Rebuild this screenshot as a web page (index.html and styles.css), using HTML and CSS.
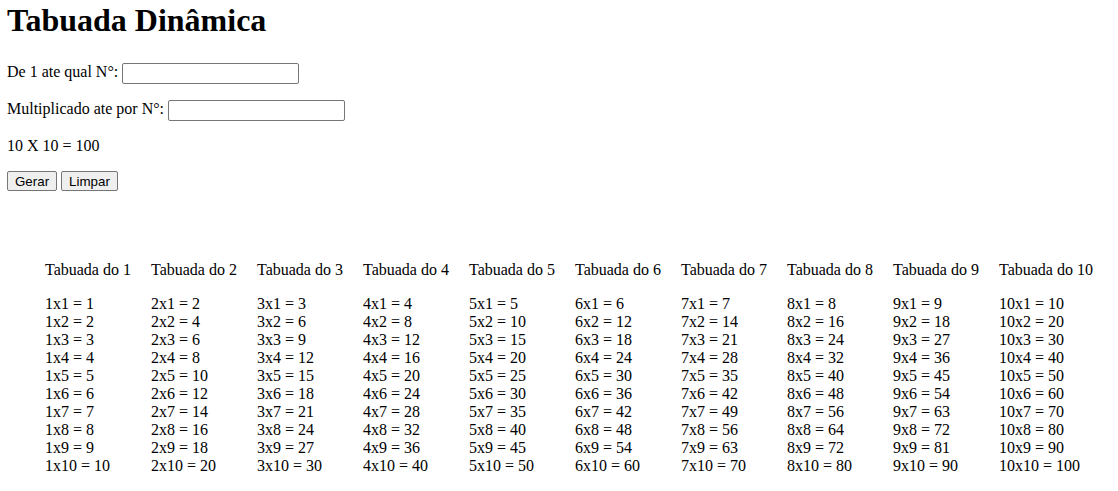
FILE: index.html
```html
<!DOCTYPE html>
<html>
  <head>
    <meta charset="utf-8" />
    <title>Tabuada Dinâmica</title>
    <meta name="viewport" content="width=device-width, initial-scale=1" />
    <link rel="stylesheet" href="styles.css">
  </head>

  <body>
    <h1>Tabuada Dinâmica</h1>

    <p>De 1 ate qual N°: <input type="text" id="ateNum" /></p>
    <p>Multiplicado ate por N°: <input type="text" id="multNum" /></p>
    <p id="resumo">10 X 10 = 100</p>
    <p>
      <button id="gerar">Gerar</button>
      <button id="limpar">Limpar</button>
    </p>

    <div id="tabuadas"></div>

    <script>
      var tabuadas = document.querySelector("#tabuadas");
      var resumo = document.querySelector("#resumo");

      function gerarTabuada(ate, mult) {
        tabuadas.innerHTML = "";
        for (var i = 1; i <= ate; i++) {
          var coluna = document.createElement("div");
          coluna.className = "coluna";

          var titulo = document.createElement("p");
          titulo.className = "titulo";
          titulo.textContent = "Tabuada do " + i;
          coluna.appendChild(titulo);

          var linhas = document.createElement("div");
          linhas.className = "linhas";
          for (var j = 1; j <= mult; j++) {
            var linha = document.createElement("div");
            linha.textContent = i + "x" + j + " = " + i * j;
            linhas.appendChild(linha);
          }
          coluna.appendChild(linhas);
          tabuadas.appendChild(coluna);
        }
        resumo.textContent = ate + " X " + mult + " = " + ate * mult;
      }

      document.querySelector("#gerar").addEventListener("click", function () {
        var ate = parseInt(document.querySelector("#ateNum").value) || 10;
        var mult = parseInt(document.querySelector("#multNum").value) || 10;
        gerarTabuada(ate, mult);
      });

      document.querySelector("#limpar").addEventListener("click", function () {
        tabuadas.innerHTML = "";
        document.querySelector("#ateNum").value = "";
        document.querySelector("#multNum").value = "";
      });

      gerarTabuada(10, 10);
    </script>
  </body>
</html>
```

FILE: styles.css
```css
body {
  margin: 2px 8px 8px 7px;
  font-family: "Liberation Serif", "Times New Roman", serif;
  font-size: 16px;
  color: black;
  background: white;
}

h1 {
  font-size: 32px;
  margin: 0 0 24px;
}

p {
  margin: 16px 0;
}

input {
  box-sizing: border-box;
  width: 177px;
  height: 21px;
  border: 1px solid #767676;
  border-radius: 2px;
  padding: 1px 2px;
  vertical-align: middle;
  font-family: "Liberation Sans", Arial, sans-serif;
  font-size: 13.33px;
}

button {
  font-family: "Liberation Sans", Arial, sans-serif;
  font-size: 13.33px;
  color: black;
  background-color: #efefef;
  border: 1px solid #767676;
  border-radius: 2px;
  padding: 1px 7px;
  height: 20px;
}

button:hover {
  background-color: #e5e5e5;
}

#tabuadas {
  display: grid;
  grid-template-columns: repeat(10, 106px);
  margin-top: 70px;
  padding-left: 38px;
}

.titulo {
  margin: 0 0 16px;
}

.linhas {
  line-height: 18px;
}
```
